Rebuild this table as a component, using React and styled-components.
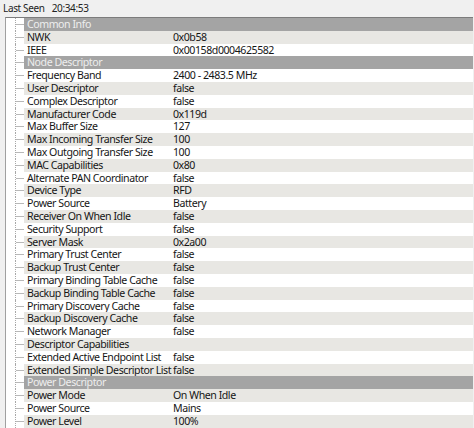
import React from 'react';
import styled, { createGlobalStyle } from 'styled-components';

const GlobalStyle = createGlobalStyle`
    body {
        margin: 0;
        background: #f0f0f0;
        font-family: "Noto Sans", sans-serif;
        font-size: 10.6px;
        letter-spacing: -0.45px;
        color: #161616;
    }
`;

const rows = [
    { group: 'Common Info' },
    ['NWK', '0x0b58'],
    ['IEEE', '0x00158d0004625582'],
    { group: 'Node Descriptor' },
    ['Frequency Band', '2400 - 2483.5 MHz'],
    ['User Descriptor', 'false'],
    ['Complex Descriptor', 'false'],
    ['Manufacturer Code', '0x119d'],
    ['Max Buffer Size', '127'],
    ['Max Incoming Transfer Size', '100'],
    ['Max Outgoing Transfer Size', '100'],
    ['MAC Capabilities', '0x80'],
    ['Alternate PAN Coordinator', 'false'],
    ['Device Type', 'RFD'],
    ['Power Source', 'Battery'],
    ['Receiver On When Idle', 'false'],
    ['Security Support', 'false'],
    ['Server Mask', '0x2a00'],
    ['Primary Trust Center', 'false'],
    ['Backup Trust Center', 'false'],
    ['Primary Binding Table Cache', 'false'],
    ['Backup Binding Table Cache', 'false'],
    ['Primary Discovery Cache', 'false'],
    ['Backup Discovery Cache', 'false'],
    ['Network Manager', 'false'],
    ['Descriptor Capabilities', ''],
    ['Extended Active Endpoint List', 'false'],
    ['Extended Simple Descriptor List', 'false'],
    { group: 'Power Descriptor' },
    ['Power Mode', 'On When Idle'],
    ['Power Source', 'Mains'],
    ['Power Level', '100%'],
];

class App extends React.Component {
    render() {
        return (
            <Page>
                <GlobalStyle />
                <TopBar>
                    <span>Last Seen</span>
                    <span>20:34:53</span>
                </TopBar>
                <Tree>
                    {rows.map((r, i) => (
                        <Row key={i}>
                            <Gutter />
                            {r.group ? (
                                <GroupCell>{r.group}</GroupCell>
                            ) : (
                                <Cells $shade={i % 2 === 1}>
                                    <Label>{r[0]}</Label>
                                    <Value>{r[1]}</Value>
                                </Cells>
                            )}
                        </Row>
                    ))}
                </Tree>
            </Page>
        );
    }
}

const Page = styled.div`
    width: 474px;
    height: 428px;
    overflow: hidden;
`;

const TopBar = styled.div`
    height: 17px;
    display: flex;
    gap: 7px;
    padding-left: 3px;
    line-height: 17px;
    font-size: 10px;
    letter-spacing: -0.35px;
    color: #222;
`;

const Tree = styled.div`
    margin-left: 5px;
    width: 467px;
    border-left: 1px solid #a0a0a0;
    border-top: 1px solid #7c7c7c;
    background: #fff;
`;

const Row = styled.div`
    height: 12.8px;
    display: flex;
    line-height: 12.8px;
`;

const Gutter = styled.div`
    position: relative;
    width: 18px;
    flex: none;
    &::before {
        content: '';
        position: absolute;
        left: 9px;
        top: 0;
        bottom: 0;
        border-left: 1px dotted #a8a8a8;
    }
    &::after {
        content: '';
        position: absolute;
        left: 10px;
        right: 0;
        top: 6px;
        border-top: 1px solid #b8b8b8;
    }
`;

const GroupCell = styled.div`
    flex: 1;
    background: #a4a4a4;
    color: #eeeeee;
    padding-left: 3px;
`;

const Cells = styled.div`
    flex: 1;
    display: flex;
    background: ${p => (p.$shade ? '#e8e7e3' : '#ffffff')};
`;

const Label = styled.div`
    width: 146px;
    padding-left: 3px;
    white-space: nowrap;
    flex: none;
    box-sizing: border-box;
`;

const Value = styled.div`
    padding-left: 3px;
    white-space: nowrap;
`;

export default App;
